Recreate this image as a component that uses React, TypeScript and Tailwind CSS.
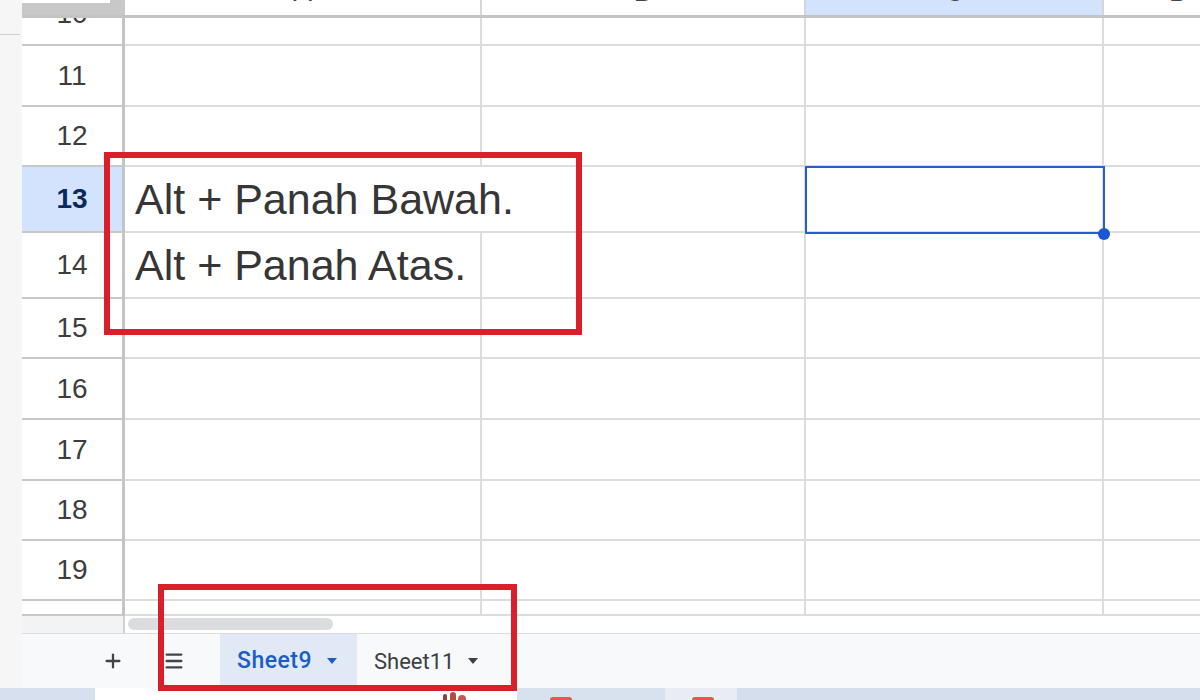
import { Plus, Menu } from 'lucide-react';

type Row = { n: number; h: string; active?: boolean; text?: string };

const rows: Row[] = [
  { n: 10, h: 'h-[28px]' },
  { n: 11, h: 'h-[61px]' },
  { n: 12, h: 'h-[60px]' },
  { n: 13, h: 'h-[66px]', active: true, text: 'Alt + Panah Bawah.' },
  { n: 14, h: 'h-[66px]', text: 'Alt + Panah Atas.' },
  { n: 15, h: 'h-[60px]' },
  { n: 16, h: 'h-[61px]' },
  { n: 17, h: 'h-[61px]' },
  { n: 18, h: 'h-[60px]' },
  { n: 19, h: 'h-[60px]' },
];

const cellLine = 'border-r-2 border-b-2 border-[#dcdcdc]';

function Caret({ color }: { color: string }) {
  return (
    <svg width="10" height="6" viewBox="0 0 10 6" className="shrink-0">
      <path d="M0 0h10L5 6z" fill={color} />
    </svg>
  );
}

function HeaderCell({ w, label, active }: { w: string; label: string; active?: boolean }) {
  return (
    <div
      className={`${w} flex shrink-0 justify-center overflow-hidden border-r-2 border-[#d6d6d6] ${
        active ? 'bg-[#d3e3fd]' : 'bg-white'
      }`}
    >
      <span className="-mt-[22px] text-[28px] leading-none text-[#444]">{label}</span>
    </div>
  );
}

function GridRow({ row }: { row: Row }) {
  const isTop = row.n === 10;
  return (
    <div className={`flex shrink-0 ${row.h}`}>
      <div
        className={`flex w-[103px] shrink-0 justify-center overflow-hidden border-r-[3px] border-b-2 border-r-[#c4c4c4] border-b-[#c8c8c8] text-[28px] ${
          isTop ? 'items-start' : 'items-center'
        } ${row.active ? 'bg-[#d3e3fd] font-bold text-[#0b2a5c]' : 'bg-white text-[#3d3d3d]'}`}
      >
        <span className={isTop ? '-mt-[18px] leading-none' : 'leading-none'}>{row.n}</span>
      </div>
      {row.active ? (
        <div className={`flex w-[681px] shrink-0 items-center pl-[10px] ${cellLine}`}>
          <span className="whitespace-nowrap text-[43px] leading-none text-[#363636]">{row.text}</span>
        </div>
      ) : (
        <>
          <div className={`flex w-[357px] shrink-0 items-center overflow-visible pl-[10px] ${cellLine}`}>
            {row.text && (
              <span className="whitespace-nowrap text-[43px] leading-none text-[#363636]">{row.text}</span>
            )}
          </div>
          <div className={`w-[324px] shrink-0 ${cellLine}`} />
        </>
      )}
      <div className={`w-[298px] shrink-0 ${cellLine}`} />
      <div className={`w-[152px] shrink-0 ${cellLine}`} />
    </div>
  );
}

export default function App() {
  return (
    <div className="relative flex h-[700px] w-[1200px] flex-col overflow-hidden bg-white font-['Liberation_Sans',Arial,sans-serif]">
      <div className="flex h-[688px] shrink-0">
        {/* left window edge */}
        <div className="w-[22px] shrink-0 bg-[#f6f6f6] pt-[34px]">
          <div className="h-px w-[20px] bg-[#cfcfcf]" />
        </div>

        <div className="flex min-w-0 flex-1 flex-col overflow-hidden">
          {/* column headers */}
          <div className="flex h-[18px] shrink-0 border-b-[3px] border-[#c4c4c4]">
            <div className="w-[103px] shrink-0 bg-[#c8c8c8]">
              <div className="h-[3px] w-[88px] bg-white" />
            </div>
            <HeaderCell w="w-[357px]" label="A" />
            <HeaderCell w="w-[324px]" label="B" />
            <HeaderCell w="w-[298px]" label="C" active />
            <HeaderCell w="w-[152px]" label="D" />
          </div>

          {rows.map((r) => (
            <GridRow key={r.n} row={r} />
          ))}

          {/* partial row 20 */}
          <div className="flex h-[15px] shrink-0">
            <div className="w-[103px] shrink-0 border-r-[3px] border-b-2 border-r-[#c4c4c4] border-b-[#c8c8c8]" />
            <div className={`w-[357px] shrink-0 ${cellLine}`} />
            <div className={`w-[324px] shrink-0 ${cellLine}`} />
            <div className={`w-[298px] shrink-0 ${cellLine}`} />
            <div className={`w-[152px] shrink-0 ${cellLine}`} />
          </div>

          {/* horizontal scrollbar */}
          <div className="flex h-[17px] shrink-0">
            <div className="w-[103px] shrink-0 border-r-2 border-[#d0d0d0] bg-[#f3f3f3]" />
            <div className="flex-1 pl-[3px] pt-[2px]">
              <div className="h-[12px] w-[205px] rounded-full bg-[#dadce0]" />
            </div>
          </div>

          {/* sheet tabs */}
          <div className="flex flex-1 items-stretch border-t border-[#dadce0] bg-[#f8f9fa] pl-[73px] font-['Roboto',sans-serif]">
            <div className="flex w-[36px] items-center justify-center text-[#444]">
              <Plus size={22} strokeWidth={2.5} />
            </div>
            <div className="ml-[25px] flex w-[36px] items-center justify-center text-[#444]">
              <Menu size={22} strokeWidth={2.5} />
            </div>
            <div className="ml-[28px] flex w-[137px] items-center gap-[15px] bg-[#e1e9f7] pl-[17px]">
              <span className="text-[23px] font-medium tracking-[0.5px] text-[#1a5dc8]">Sheet9</span>
              <Caret color="#1a5dc8" />
            </div>
            <div className="flex items-center gap-[14px] pl-[17px]">
              <span className="text-[22px] text-[#3c4043]">Sheet11</span>
              <Caret color="#3c4043" />
            </div>
          </div>
        </div>
      </div>

      {/* taskbar strip peeking in at the bottom */}
      <div className="flex h-[12px] shrink-0">
        <div className="w-[95px] shrink-0 bg-[#d6e0ee]" />
        <div className="flex w-[422px] shrink-0 items-end bg-white pl-[348px]">
          <div className="h-[6px] w-[4px] rounded-t-sm bg-[#9a3a3a]" />
          <div className="ml-[3px] h-[8px] w-[6px] rounded-t-sm bg-[#b84a40]" />
          <div className="ml-[2px] h-[5px] w-[8px] rounded-t-full bg-[#c45a50]" />
        </div>
        <div className="flex w-[148px] shrink-0 items-end bg-[#d8e2ef] pl-[33px]">
          <div className="h-[3px] w-[22px] rounded-t-full bg-[#e05a4f]" />
        </div>
        <div className="flex w-[72px] shrink-0 items-end bg-[#e9edf3] pl-[27px]">
          <div className="h-[3px] w-[22px] rounded-t-full bg-[#e05a4f]" />
        </div>
        <div className="flex-1 bg-[#d4deec]" />
      </div>

      {/* active cell C13 */}
      <div className="absolute left-[805px] top-[166px] h-[68px] w-[300px] border-2 border-[#2460c8]" />
      <div className="absolute left-[1098px] top-[228px] h-[12px] w-[12px] rounded-full bg-[#1a56d6]" />

      {/* red annotation boxes */}
      <div className="absolute left-[104px] top-[152px] h-[183px] w-[478px] border-[6px] border-[#db1f2a]" />
      <div className="absolute left-[158px] top-[584px] h-[107px] w-[359px] border-[6px] border-[#db1f2a]" />
    </div>
  );
}
